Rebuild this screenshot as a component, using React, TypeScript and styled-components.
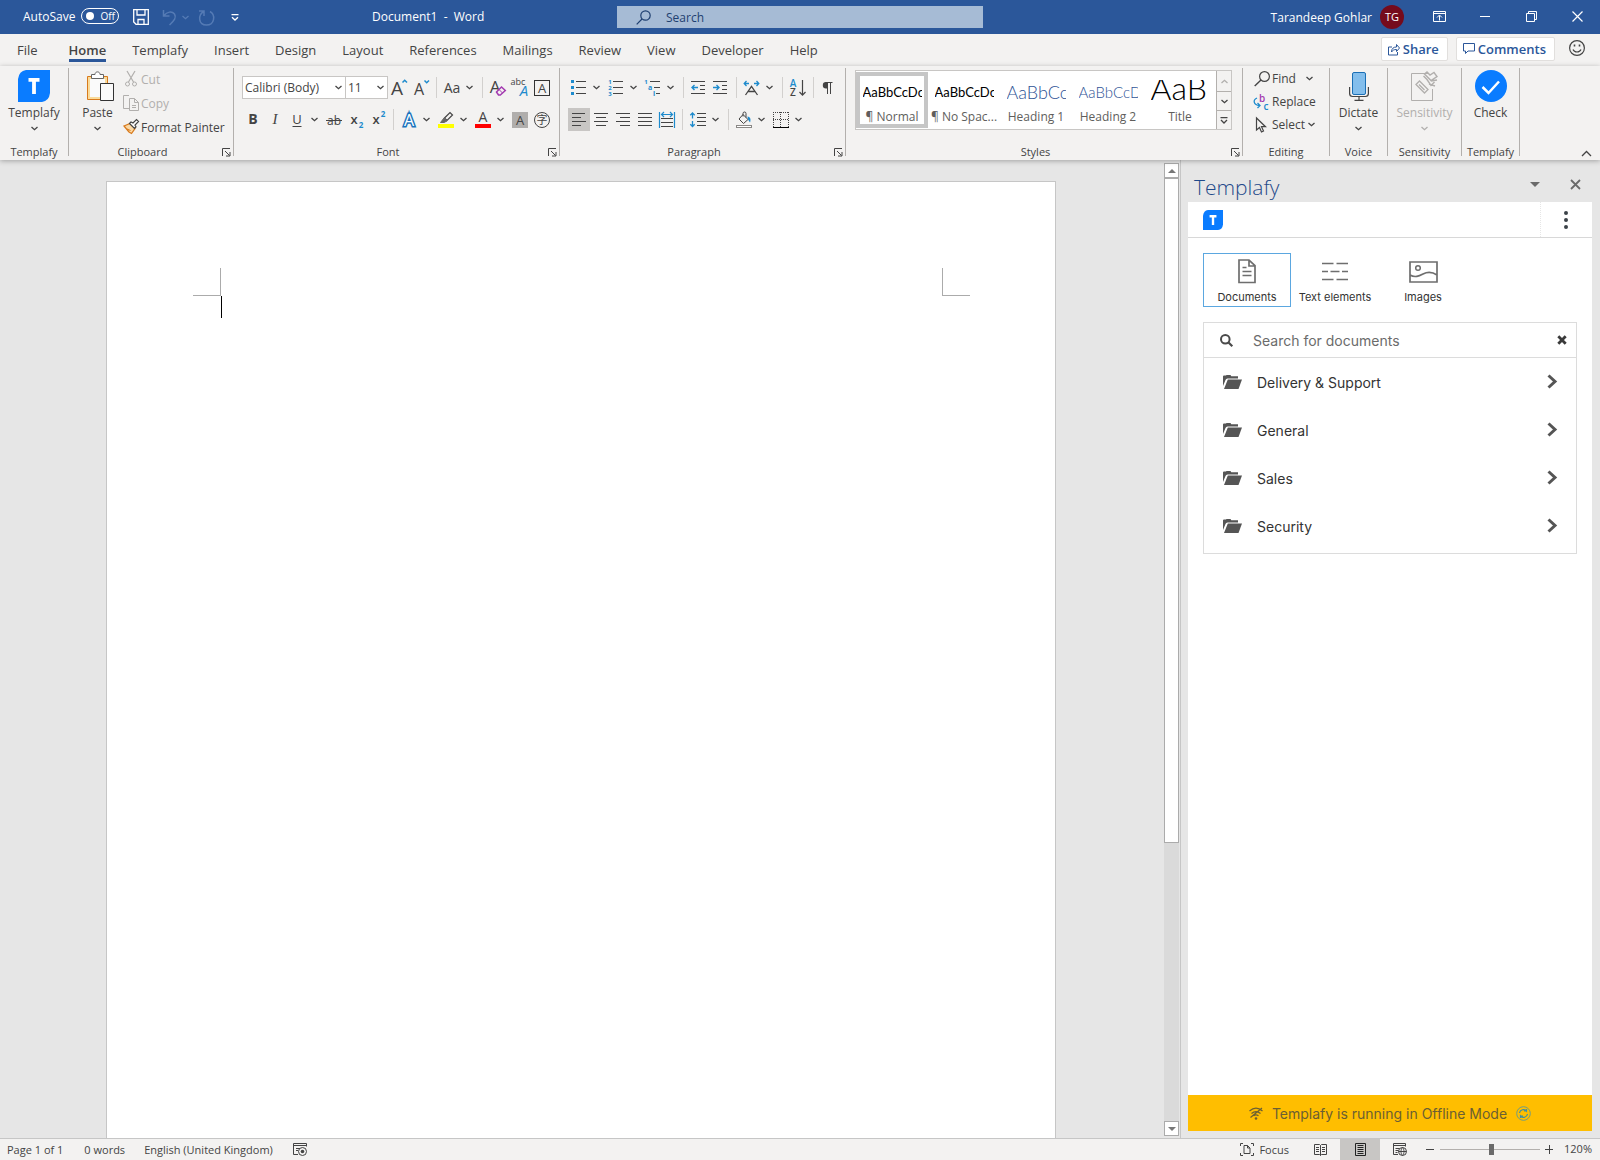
import React from "react";
import styled, { createGlobalStyle, css } from "styled-components";

const UI = '"Open Sans", "Noto Sans", sans-serif';
const PANE = 'Inter, Roboto, sans-serif';
const INK = "#444444";
const BLUE = "#2b579a";
const ACCENT = "#1e8bcd";

const GlobalStyle = createGlobalStyle`
  * { box-sizing: border-box; }
  html, body, #root { height: 100%; }
  body { margin: 0; font-family: ${UI}; font-size: 12px; color: ${INK}; background: #e6e6e6; }
  button, input, select { font: inherit; color: inherit; margin: 0; padding: 0; border: 0; background: none; }
  button { cursor: pointer; }
  svg { display: block; flex: none; overflow: visible; }
`;

const Shell = styled.div`
  display: flex;
  flex-direction: column;
  height: 100vh;
  overflow: hidden;
`;

/* ---------- title bar ---------- */
const TitleBar = styled.header`
  display: grid;
  grid-template-columns: 1fr 366px 1fr;
  align-items: center;
  height: 34px;
  flex: none;
  background: ${BLUE};
  color: #fff;
`;
const QuickAccess = styled.div`
  display: flex;
  align-items: center;
  padding-left: 23px;
`;
const AutoSave = styled.label`
  display: flex;
  align-items: center;
  gap: 6px;
  padding-bottom: 2px;
`;
const Toggle = styled.span`
  display: flex;
  align-items: center;
  gap: 6px;
  width: 38px;
  height: 16px;
  padding-left: 4px;
  border: 1px solid #fff;
  border-radius: 8px;
  font-size: 10px;
  line-height: 14px;
  &::before {
    content: "";
    width: 8px;
    height: 8px;
    border-radius: 50%;
    background: #fff;
  }
`;
const HiddenCheck = styled.input`
  appearance: none;
  width: 0;
  height: 0;
  margin-left: -6px;
`;
const QuickButton = styled.button<{ $faded?: boolean; $gap: number }>`
  display: flex;
  align-items: center;
  gap: 5px;
  height: 24px;
  margin-left: ${(p) => p.$gap}px;
  color: ${(p) => (p.$faded ? "#557bb5" : "#fff")};
`;
const DocTitle = styled.span`
  flex: 1;
  padding-bottom: 2px;
  text-align: center;
  white-space: pre;
`;
const SearchBox = styled.label`
  display: flex;
  align-items: center;
  gap: 15px;
  height: 22px;
  padding-left: 19px;
  background: #a6bbd5;
  color: #1f3f70;
`;
const SearchInput = styled.input`
  flex: 1;
  min-width: 0;
  outline: none;
  &::placeholder { color: #1f3f70; opacity: 1; }
`;
const TitleRight = styled.div`
  display: flex;
  align-items: center;
  justify-content: flex-end;
`;
const Avatar = styled.span`
  width: 24px;
  height: 24px;
  margin: 0 12px 0 8px;
  border-radius: 50%;
  background: #750b1c;
  font-size: 11px;
  line-height: 24px;
  text-align: center;
`;
const WindowButton = styled.button`
  display: flex;
  align-items: center;
  justify-content: center;
  width: 46px;
  height: 32px;
  padding-bottom: 2px;
`;

/* ---------- tabs ---------- */
const TabBar = styled.nav`
  display: flex;
  align-items: center;
  height: 32px;
  flex: none;
  padding: 0 15px 0 4px;
  background: #f3f2f1;
`;
const Tab = styled.button<{ $active?: boolean }>`
  height: 30px;
  padding: 0 13px;
  font-size: 13px;
  line-height: 28px;
  position: relative;
  &:first-child { margin-right: 5px; }
  ${(p) =>
    p.$active &&
    css`
      font-weight: 600;
      &::after {
        content: "";
        position: absolute;
        left: 13px;
        right: 13px;
        bottom: 3px;
        height: 3px;
        background: ${BLUE};
      }
    `}
`;
const TabActions = styled.div`
  display: flex;
  align-items: center;
  gap: 8px;
  margin-left: auto;
`;
const ActionButton = styled.button`
  display: flex;
  align-items: center;
  gap: 3px;
  height: 24px;
  margin-bottom: 2px;
  padding: 0 8px 0 6px;
  border: 1px solid #e1dfdd;
  border-radius: 2px;
  background: #fff;
  color: ${BLUE};
  font-size: 13px;
  font-weight: 600;
`;
const Smiley = styled.button`
  margin: 0 0 4px 6px;
`;

/* ---------- ribbon ---------- */
const Ribbon = styled.section`
  display: flex;
  flex: none;
  height: 94px;
  padding-top: 2px;
  background: #f3f2f1;
  box-shadow: 0 1px 5px rgba(0, 0, 0, 0.3);
  position: relative;
  z-index: 1;
`;
const GroupBox = styled.div<{ $w: number }>`
  display: flex;
  flex-direction: column;
  flex: none;
  width: ${(p) => p.$w}px;
  height: 88px;
  border-right: 1px solid #b3b0ad;
`;
const GroupBody = styled.div<{ $pad?: string; $dir?: string }>`
  display: flex;
  flex: none;
  flex-direction: ${(p) => p.$dir || "row"};
  gap: ${(p) => (p.$dir ? "9px" : "0")};
  height: 77px;
  padding: ${(p) => p.$pad || "0"};
`;
const GroupFoot = styled.div`
  display: flex;
  align-items: center;
  height: 14px;
  line-height: 14px;
`;
const GroupName = styled.span`
  flex: 1;
  text-align: center;
  font-size: 11px;
  white-space: nowrap;
`;
const Launcher = styled.button`
  margin: 0 2px 0 6px;
`;
const BigButton = styled.button<{ $w?: number; $off?: boolean }>`
  display: flex;
  flex-direction: column;
  align-items: center;
  width: ${(p) => (p.$w ? p.$w + "px" : "100%")};
  height: 74px;
  padding-top: 2px;
  line-height: 16px;
  color: ${(p) => (p.$off ? "#b1afad" : INK)};
  white-space: nowrap;
`;
const BigIcon = styled.span`
  display: flex;
  align-items: center;
  justify-content: center;
  height: 32px;
  margin-bottom: 3px;
`;
const BigChevron = styled.span`
  margin-top: 5px;
`;
const Stack = styled.div`
  display: flex;
  flex-direction: column;
  margin-top: -1px;
`;
const SmallButton = styled.button<{ $h: number; $off?: boolean }>`
  display: flex;
  align-items: center;
  gap: 2px;
  height: ${(p) => p.$h}px;
  color: ${(p) => (p.$off ? "#b1afad" : INK)};
  white-space: nowrap;
`;
const SmallIcon = styled.span`
  display: flex;
  width: 16px;
  justify-content: center;
`;
const SmallChevron = styled.span<{ $gap: number }>`
  margin-left: ${(p) => p.$gap}px;
`;
const ToolRow = styled.div`
  display: flex;
  align-items: center;
  height: 23px;
`;
const Tool = styled.button<{ $on?: boolean }>`
  display: flex;
  align-items: center;
  justify-content: center;
  width: 22px;
  height: 23px;
  background: ${(p) => (p.$on ? "#c8c6c4" : "transparent")};
`;
const Drop = styled.button`
  display: flex;
  align-items: center;
  width: 15px;
  height: 23px;
  padding-left: 3px;
`;
const Rule = styled.span`
  width: 1px;
  height: 21px;
  margin: 0 4px;
  background: #d2d0ce;
`;
const Combo = styled.span<{ $w: number }>`
  display: grid;
  grid-template-columns: 1fr 10px;
  align-items: center;
  width: ${(p) => p.$w}px;
  height: 23px;
  margin-right: -1px;
  border: 1px solid #c8c6c4;
  background: #fff;
  & > select {
    grid-area: 1 / 1 / 2 / 3;
    appearance: none;
    height: 21px;
    padding-left: 2px;
    outline: none;
  }
  & > svg { grid-area: 1 / 2; pointer-events: none; }
`;
const ComboEnd = styled.span`
  width: 1px;
`;

/* ---------- styles gallery ---------- */
const Gallery = styled.div`
  display: flex;
  width: 377px;
  height: 60px;
  border: 1px solid #c8c6c4;
  background: #fff;
`;
const StyleCard = styled.button<{ $on?: boolean }>`
  display: flex;
  flex-direction: column;
  align-items: center;
  gap: 5px;
  width: 72px;
  height: 56px;
  margin-top: 1px;
  padding-top: 4px;
  border: 4px solid ${(p) => (p.$on ? "#c6c6c6" : "transparent")};
`;
const Sample = styled.span<{ $size: number; $color: string; $light?: boolean; $lh?: number }>`
  flex: none;
  width: 59px;
  height: 24px;
  overflow: hidden;
  text-align: left;
  font-family: Lato, sans-serif;
  font-size: ${(p) => p.$size}px;
  font-weight: ${(p) => (p.$light ? 300 : 400)};
  line-height: ${(p) => p.$lh || 24}px;
  color: ${(p) => p.$color};
  white-space: nowrap;
`;
const SampleName = styled.span`
  line-height: 16px;
  white-space: nowrap;
  color: #605e5c;
`;
const GallerySteps = styled.div`
  display: grid;
  grid-template-rows: 20px 19px 1fr;
  width: 15px;
  margin-left: auto;
  border-left: 1px solid #b3b0ad;
`;
const Step = styled.button<{ $off?: boolean }>`
  display: flex;
  align-items: center;
  justify-content: center;
  background: #f3f2f1;
  color: ${(p) => (p.$off ? "#b1afad" : INK)};
  & + & { border-top: 1px solid #b3b0ad; }
`;
const Collapse = styled.button`
  align-self: flex-end;
  margin: 0 8px 3px auto;
`;

/* ---------- workspace ---------- */
const Workspace = styled.main`
  display: flex;
  flex: 1;
  min-height: 0;
`;
const Canvas = styled.div`
  display: flex;
  justify-content: center;
  flex: 1;
  padding: 21px 2px 0 0;
`;
const Page = styled.article`
  width: 950px;
  padding: 86px 85px 0 86px;
  border: 1px solid #c6c6c6;
  border-bottom: 0;
  background: #fff;
`;
const Corners = styled.div`
  display: flex;
  justify-content: space-between;
`;
const Corner = styled.span<{ $side: "left" | "right" }>`
  width: 28px;
  height: 28px;
  border-bottom: 1px solid #ababab;
  ${(p) => (p.$side === "left" ? "border-right" : "border-left")}: 1px solid #ababab;
`;
const Caret = styled.span`
  display: block;
  width: 1px;
  height: 22px;
  margin-left: 28px;
  background: #000;
`;
const Scroll = styled.div`
  display: flex;
  flex-direction: column;
  width: 15px;
  margin: 3px 1px 2px 0;
  background: #dadada;
`;
const ScrollButton = styled.button`
  display: flex;
  align-items: center;
  justify-content: center;
  height: 15px;
  border: 1px solid #ababab;
  background: #fff;
`;
const ScrollTrack = styled.div`
  flex: 1;
`;
const Thumb = styled.div`
  height: 70.5%;
  border: 1px solid #ababab;
  background: #fff;
`;

/* ---------- task pane ---------- */
const Pane = styled.aside`
  display: flex;
  flex-direction: column;
  width: 420px;
  padding: 0 8px 7px 7px;
  border-left: 1px solid #c6c6c6;
`;
const PaneTitle = styled.div`
  display: flex;
  align-items: center;
  height: 42px;
  padding: 12px 11px 0 6px;
`;
const PaneName = styled.h1`
  flex: 1;
  margin: 0;
  font-size: 21px;
  font-weight: 300;
  line-height: 28px;
  color: #1f4a8a;
`;
const PaneButton = styled.button`
  margin: -6px 0 0 30px;
`;
const PaneBody = styled.div`
  display: flex;
  flex-direction: column;
  flex: 1;
  background: #fff;
  font-family: ${PANE};
  color: #333;
`;
const PaneHeader = styled.div`
  display: flex;
  align-items: center;
  justify-content: space-between;
  height: 36px;
  padding-left: 15px;
  border-bottom: 1px solid #d8d8d8;
`;
const More = styled.button`
  display: flex;
  align-items: center;
  justify-content: center;
  width: 52px;
  height: 35px;
  padding-right: 2px;
  border-left: 1px dotted #e6e6e6;
`;
const KindTabs = styled.div`
  display: flex;
  padding: 15px 15px 0;
`;
const KindTab = styled.button<{ $on?: boolean }>`
  display: flex;
  flex-direction: column;
  align-items: center;
  gap: 5px;
  width: 88px;
  height: 54px;
  padding-top: 4px;
  border: 1px solid ${(p) => (p.$on ? "#5ba7e0" : "transparent")};
  font-size: 11px;
  line-height: 16px;
  white-space: nowrap;
`;
const Finder = styled.div`
  margin: 15px 15px 0;
  border: 1px solid #dcdcdc;
`;
const FinderField = styled.label`
  display: flex;
  align-items: center;
  height: 35px;
  padding: 0 9px 0 16px;
  border-bottom: 1px solid #dcdcdc;
`;
const FinderInput = styled.input`
  flex: 1;
  min-width: 0;
  padding-left: 20px;
  font-size: 14px;
  outline: none;
  &::placeholder { color: #6b6b6b; opacity: 1; }
`;
const FolderList = styled.ul`
  margin: 0;
  padding: 0 0 3px;
  list-style: none;
`;
const FolderRow = styled.button`
  display: flex;
  align-items: center;
  gap: 14px;
  width: 100%;
  height: 48px;
  padding: 0 19px;
  font-size: 14px;
  text-align: left;
  & > span { flex: 1; }
`;
const Offline = styled.div`
  display: flex;
  align-items: center;
  justify-content: center;
  gap: 9px;
  height: 36px;
  margin-top: auto;
  background: #ffbe00;
  color: #6b5f33;
  font-size: 14px;
`;

/* ---------- status bar ---------- */
const StatusBar = styled.footer`
  display: flex;
  align-items: center;
  flex: none;
  height: 22px;
  padding: 0 8px 0 7px;
  border-top: 1px solid #c6c6c6;
  background: #f3f2f1;
  font-size: 11px;
  white-space: nowrap;
`;
const StatusItem = styled.button<{ $gap?: number }>`
  display: flex;
  align-items: center;
  gap: 5px;
  height: 21px;
  margin-right: ${(p) => p.$gap || 0}px;
  padding-bottom: 1px;
`;
const Spacer = styled.span`
  flex: 1;
`;
const ViewButton = styled.button<{ $on?: boolean }>`
  display: flex;
  align-items: center;
  justify-content: center;
  width: 40px;
  height: 21px;
  background: ${(p) => (p.$on ? "#c8c6c4" : "transparent")};
`;
const Zoom = styled.input`
  appearance: none;
  width: 100px;
  height: 21px;
  margin: 0 5px;
  background: linear-gradient(#b3b0ad, #b3b0ad) center / 100% 1px no-repeat;
  &::-webkit-slider-thumb {
    appearance: none;
    width: 5px;
    height: 11px;
    background: #6a6a6a;
  }
`;
const ZoomValue = styled.span`
  width: 38px;
  padding-bottom: 2px;
  text-align: right;
`;

/* ---------- icons ---------- */
type IconProps = { w?: number; h?: number; children: React.ReactNode };
const Icon = ({ w = 16, h = 16, children }: IconProps) => (
  <svg width={w} height={h} viewBox={`0 0 ${w} ${h}`} fill="none" stroke="currentColor" strokeWidth="1" aria-hidden="true">
    {children}
  </svg>
);
const Glyph = ({ x, y, s, c = INK, w = 400, i, f = UI, children }: any) => (
  <text x={x} y={y} fontSize={s} fontFamily={f} fontWeight={w} fontStyle={i ? "italic" : "normal"} textAnchor="middle" fill={c} stroke="none">
    {children}
  </text>
);
const Chevron = () => (
  <Icon w={7} h={5}>
    <path d="M.5 1 3.500 3.700l3-2.700" strokeWidth="1.300" />
  </Icon>
);
const ChevronUp = () => (
  <Icon w={7} h={5}>
    <path d="M.5 4 3.500 1.300l3 2.700" strokeWidth="1.300" />
  </Icon>
);
const TemplafyLogo = ({ size }: { size: number }) => (
  <svg width={size} height={size} viewBox="0 0 32 32" aria-hidden="true">
    <path d="M8 0H32V23Q31 31 24 32H0V9Q1 1 8 0Z" fill="#0a7cff" />
    <path d="M10.500 8h11v3.800h-3.600V24h-3.800V11.800h-3.600z" fill="#fff" />
  </svg>
);
const LauncherIcon = () => (
  <Icon w={9} h={9}>
    <path d="M.5 8V.5H8M3 3l4.500 4.500M8 4v4H4" />
  </Icon>
);
const lines = (list: number[][]) => list.map(([x1, x2, y]) => `M${x1} ${y}.5H${x2}`).join("");
const Align = ({ rows }: { rows: number[][] }) => (
  <Icon>
    <path d={lines(rows)} />
  </Icon>
);

type GroupProps = { name: string; w: number; launcher?: boolean; pad?: string; dir?: string; children: React.ReactNode };
const Group = ({ name, w, launcher, pad, dir, children }: GroupProps) => (
  <GroupBox $w={w}>
    <GroupBody $pad={pad} $dir={dir}>{children}</GroupBody>
    <GroupFoot>
      <GroupName>{name}</GroupName>
      {launcher && (
        <Launcher aria-label={`${name} settings`}>
          <LauncherIcon />
        </Launcher>
      )}
    </GroupFoot>
  </GroupBox>
);
const Split = ({ label, children }: { label: string; children: React.ReactNode }) => (
  <>
    <Tool aria-label={label}>{children}</Tool>
    <Drop aria-label={`${label} options`}>
      <Chevron />
    </Drop>
  </>
);

const tabs = ["File", "Home", "Templafy", "Insert", "Design", "Layout", "References", "Mailings", "Review", "View", "Developer", "Help"];
const folders = ["Delivery & Support", "General", "Sales", "Security"];
const styleCards = [
  { name: "¶ Normal", text: "AaBbCcDc", size: 13, color: "#000" },
  { name: "¶ No Spac...", text: "AaBbCcDc", size: 13, color: "#000" },
  { name: "Heading 1", text: "AaBbCc", size: 18, color: "#2f5496", light: true },
  { name: "Heading 2", text: "AaBbCcD", size: 15, color: "#2f5496", light: true },
  { name: "Title", text: "AaB", size: 32, color: "#000", light: true, lh: 16 },
];

const FontGroup = () => (
  <Group name="Font" w={326} launcher pad="8px 0 0 8px" dir="column">
    <ToolRow>
      <Combo $w={104}>
        <select aria-label="Font"><option>Calibri (Body)</option></select>
        <Chevron />
      </Combo>
      <Combo $w={43}>
        <select aria-label="Font size"><option>11</option></select>
        <Chevron />
      </Combo>
      <ComboEnd />
      <Tool aria-label="Grow font">
        <Icon w={18} h={20}><Glyph x={7} y={17} s={19}>A</Glyph><path d="M12.500 4.500 14.700 2.300 17 4.500" stroke={ACCENT} strokeWidth="1.500" /></Icon>
      </Tool>
      <Tool aria-label="Shrink font">
        <Icon w={18} h={20}><Glyph x={7} y={17} s={16}>A</Glyph><path d="M12.500 2.500l2.200 2.200L17 2.500" stroke={ACCENT} strokeWidth="1.500" /></Icon>
      </Tool>
      <Rule />
      <Split label="Change case"><Icon w={20} h={16}><Glyph x={10} y={13} s={14}>Aa</Glyph></Icon></Split>
      <Rule />
      <Tool aria-label="Clear formatting">
        <Icon w={18} h={18}>
          <Glyph x={6} y={14} s={17}>A</Glyph>
          <path d="M7.500 13 12.500 8l3.800 3.500-5 4.500H9.500z" fill="#f3f2f1" stroke="#a33ab0" strokeWidth="1.500" />
          <path d="M10 10.500l3.500 3.500" stroke="#a33ab0" />
        </Icon>
      </Tool>
      <Tool aria-label="Phonetic guide">
        <Icon w={18} h={18}><Glyph x={7} y={6} s={9}>abc</Glyph><Glyph x={13} y={17} s={15} c={ACCENT} i>A</Glyph></Icon>
      </Tool>
      <Tool aria-label="Character border">
        <Icon><rect x=".5" y=".5" width="15" height="15" stroke="#333" /><Glyph x={8} y={13} s={13}>A</Glyph></Icon>
      </Tool>
    </ToolRow>
    <ToolRow>
      <Tool aria-label="Bold"><Icon><Glyph x={8} y={12} s={14} w={700}>B</Glyph></Icon></Tool>
      <Tool aria-label="Italic"><Icon><Glyph x={8} y={12} s={15} i f='"Liberation Serif", serif'>I</Glyph></Icon></Tool>
      <Split label="Underline"><Icon><Glyph x={8} y={12} s={13}>U</Glyph><path d="M3.500 14.500h9" /></Icon></Split>
      <Tool aria-label="Strikethrough"><Icon><Glyph x={8} y={13} s={12}>ab</Glyph><path d="M0 8.500h16" /></Icon></Tool>
      <Tool aria-label="Subscript"><Icon><Glyph x={6} y={12} s={13} w={600}>x</Glyph><Glyph x={13} y={16} s={8} c={ACCENT} w={700}>2</Glyph></Icon></Tool>
      <Tool aria-label="Superscript"><Icon><Glyph x={6} y={12} s={13} w={600}>x</Glyph><Glyph x={13} y={5} s={8} c={ACCENT} w={700}>2</Glyph></Icon></Tool>
      <Rule />
      <Split label="Text effects">
        <Icon><text x="8" y="14" fontSize="16" fontFamily={UI} fontWeight="400" textAnchor="middle" fill="#fff" stroke="#1a73bd" strokeWidth="3" paintOrder="stroke">A</text></Icon>
      </Split>
      <Split label="Highlight colour">
        <Icon>
          <path d="M6.500 6 12 .5 14.500 3 9 8.500Z" fill="#f3f2f1" strokeWidth="1.200" />
          <path d="M6 6 9 9 6 10.500H2.500Z" fill="#666" stroke="#666" />
          <rect y="12" width="16" height="4" fill="#ffff00" stroke="none" />
        </Icon>
      </Split>
      <Split label="Font colour">
        <Icon><Glyph x={8} y={10} s={14}>A</Glyph><rect y="12" width="16" height="4" fill="#ff0000" stroke="none" /></Icon>
      </Split>
      <Tool aria-label="Character shading">
        <Icon><rect width="16" height="16" fill="#b0aeac" stroke="none" /><Glyph x={8} y={13} s={13}>A</Glyph></Icon>
      </Tool>
      <Tool aria-label="Enclose characters">
        <Icon><circle cx="8" cy="8" r="7.500" /><Glyph x={8} y={12} s={11} f='"Noto Sans CJK SC", sans-serif'>字</Glyph></Icon>
      </Tool>
    </ToolRow>
  </Group>
);

const ParagraphGroup = () => (
  <Group name="Paragraph" w={286} launcher pad="8px 0 0 8px" dir="column">
    <ToolRow>
      <Split label="Bullets">
        <Icon><path d={lines([[5, 15, 1], [5, 15, 7], [5, 15, 13]])} /><path d="M0 0h3v3H0zM0 6h3v3H0zM0 12h3v3H0z" fill={ACCENT} stroke="none" /></Icon>
      </Split>
      <Split label="Numbering">
        <Icon>
          <path d={lines([[5, 15, 1], [5, 15, 7], [5, 15, 13]])} />
          <Glyph x={2} y={4} s={6} w={700} c={ACCENT}>1</Glyph><Glyph x={2} y={10} s={6} w={700} c={ACCENT}>2</Glyph><Glyph x={2} y={16} s={6} w={700} c={ACCENT}>3</Glyph>
        </Icon>
      </Split>
      <Split label="Multilevel list">
        <Icon>
          <path d={lines([[5, 15, 1], [9, 15, 7], [11, 15, 13]])} />
          <Glyph x={1} y={4} s={6} w={700} c={ACCENT}>1</Glyph><Glyph x={5} y={10} s={7} w={700} c={ACCENT}>a</Glyph><Glyph x={9} y={16} s={7} w={700} c={ACCENT}>i</Glyph>
        </Icon>
      </Split>
      <Rule />
      <Tool aria-label="Decrease indent">
        <Icon><path d={lines([[0, 14, 1], [9, 14, 5], [9, 14, 9], [0, 14, 13]])} /><path d="M7 7.500H1M3.500 5 1 7.500 3.500 10" stroke={ACCENT} strokeWidth="1.400" /></Icon>
      </Tool>
      <Tool aria-label="Increase indent">
        <Icon><path d={lines([[0, 14, 1], [9, 14, 5], [9, 14, 9], [0, 14, 13]])} /><path d="M0 7.500h6M3.500 5 6 7.500 3.500 10" stroke={ACCENT} strokeWidth="1.400" /></Icon>
      </Tool>
      <Rule />
      <Split label="Asian layout">
        <Icon><path d="M1.500 15 7.500 6.500 13.500 15M4 11.500h7" strokeWidth="1.300" /><path d="M5 3.500H.3M2.500 1 .2 3.500 2.500 6M10 3.500h4.700M12.500 1l2.300 2.500L12.500 6" stroke={ACCENT} strokeWidth="1.300" /></Icon>
      </Split>
      <Rule />
      <Tool aria-label="Sort">
        <Icon w={16} h={18}><Glyph x={3} y={8} s={10} c={ACCENT} w={600}>A</Glyph><Glyph x={3} y={17} s={10} w={600}>Z</Glyph><path d="M12.500 1v15M9.500 13l3 3.200 3-3.200" strokeWidth="1.200" /></Icon>
      </Tool>
      <Rule />
      <Tool aria-label="Show marks">
        <Icon><path d="M6 2H5a3.200 3.200 0 0 0 0 6.400h1z" fill="currentColor" stroke="none" /><path d="M6.500 14V2.500M9.500 14V2.500M4.500 2.500h7" /></Icon>
      </Tool>
    </ToolRow>
    <ToolRow>
      <Tool $on aria-label="Align left"><Align rows={[[1, 14, 1], [1, 10, 5], [1, 15, 9], [1, 10, 13]]} /></Tool>
      <Tool aria-label="Centre"><Align rows={[[1, 15, 1], [3, 13, 5], [1, 15, 9], [3, 13, 13]]} /></Tool>
      <Tool aria-label="Align right"><Align rows={[[1, 15, 1], [5, 15, 5], [1, 15, 9], [5, 15, 13]]} /></Tool>
      <Tool aria-label="Justify"><Align rows={[[1, 15, 1], [1, 15, 5], [1, 15, 9], [1, 15, 13]]} /></Tool>
      <Tool aria-label="Distribute">
        <Icon><path d={lines([[2, 14, 6], [2, 14, 10], [2, 14, 14]])} /><path d="M.5 0v16M15.500 0v16M2.500 2.500h11M5 0 2.500 2.500 5 5M11 0l2.500 2.500L11 5" stroke={ACCENT} strokeWidth="1.200" /></Icon>
      </Tool>
      <Rule />
      <Split label="Line spacing">
        <Icon><path d={lines([[7, 16, 1], [7, 16, 5], [7, 16, 9], [7, 16, 13]])} /><path d="M2.500 6.500V1M.3 3.300 2.500 1l2.200 2.300M2.500 9v5.500M.3 12.200l2.200 2.300 2.200-2.300" stroke={ACCENT} strokeWidth="1.300" /></Icon>
      </Split>
      <Rule />
      <Split label="Shading">
        <Icon><path d="M7 2.500 12 7.500 7.500 11.500 3 7Z M7 4.500V1.500a1.500 1.500 0 0 1 3 0v4" /><path d="M11.500 4.500c3 .5 3.500 3 2.500 6l-2-3z" fill={ACCENT} stroke="none" /><rect x=".5" y="13.500" width="15" height="2" fill="#fff" stroke="#8a8886" /></Icon>
      </Split>
      <Split label="Borders">
        <Icon><path d="M.5 0v15M15.500 0v15M7.500 0v15M0 .5h15M0 7.500h15" strokeDasharray="1 1" /><path d="M0 15.500h16" stroke="#000" /></Icon>
      </Split>
    </ToolRow>
  </Group>
);

export default function App() {
  return (
    <Shell>
      <GlobalStyle />
      <TitleBar>
        <QuickAccess>
          <AutoSave>
            AutoSave
            <HiddenCheck type="checkbox" />
            <Toggle>Off</Toggle>
          </AutoSave>
          <QuickButton $gap={14} aria-label="Save">
            <Icon w={16} h={16}><path d="M.7.7h14.600v14.600H3L.7 13zM4 1v5h8V1M5 15v-4.500h6V15" strokeWidth="1.300" /></Icon>
          </QuickButton>
          <QuickButton $gap={13} $faded aria-label="Undo">
            <Icon w={15} h={17}><path d="M1.500 1v6h6M2 6.500C5 2.500 10 2 12.500 5c2.500 4-1 7-5 11" strokeWidth="1.500" /></Icon>
            <Chevron />
          </QuickButton>
          <QuickButton $gap={9} $faded aria-label="Redo">
            <Icon w={18} h={17}><path d="M1 2h5v5M12 2.500c6 3.500 4.500 13.500-3.500 13.500C0 16 0 6 5.500 2.500" strokeWidth="1.500" /></Icon>
          </QuickButton>
          <QuickButton $gap={15} aria-label="Customise toolbar">
            <Icon w={8} h={7}><path d="M.5.7h7M1 3.200l3 2.800 3-2.800" strokeWidth="1.300" /></Icon>
          </QuickButton>
          <DocTitle>{"Document1  -  Word"}</DocTitle>
        </QuickAccess>
        <SearchBox>
          <Icon w={15} h={15}><circle cx="9.500" cy="5.500" r="4.700" strokeWidth="1.200" /><path d="M6 9 .7 14.300" strokeWidth="1.200" /></Icon>
          <SearchInput placeholder="Search" aria-label="Search" />
        </SearchBox>
        <TitleRight>
          <span>Tarandeep Gohlar</span>
          <Avatar>TG</Avatar>
          <WindowButton aria-label="Ribbon display options">
            <Icon w={13} h={11}><path d="M.5.5h12v10H.5zM.5 2.500h12M6.500 9.500v-5M4 6.500 6.500 4 9 6.500" /></Icon>
          </WindowButton>
          <WindowButton aria-label="Minimise"><Icon w={10} h={1}><path d="M0 .5h10" /></Icon></WindowButton>
          <WindowButton aria-label="Restore"><Icon w={11} h={11}><path d="M.5 2.500h8v8h-8zM2.500 2.500v-2h8v8h-2" /></Icon></WindowButton>
          <WindowButton aria-label="Close"><Icon w={11} h={11}><path d="M.5.5l10 10M10.500.5l-10 10" strokeWidth="1.200" /></Icon></WindowButton>
        </TitleRight>
      </TitleBar>

      <TabBar>
        {tabs.map((t) => (
          <Tab key={t} $active={t === "Home"}>{t}</Tab>
        ))}
        <TabActions>
          <ActionButton>
            <Icon w={12} h={13}><path d="M4 4H.5v8h9V9M3.500 9c0-3.500 2-5 5-5V1.500l3 3.500-3 3.500V6.500c-2.500 0-3.800.7-5 2.500z" /></Icon>
            Share
          </ActionButton>
          <ActionButton>
            <Icon w={12} h={12}><path d="M.5.5h11v7.500H5L2.500 10.500V8h-2z" /></Icon>
            Comments
          </ActionButton>
          <Smiley aria-label="Feedback">
            <Icon w={16} h={16}><circle cx="8" cy="8" r="7.400" strokeWidth="1.200" /><path d="M4 9.500c1.500 3.300 6.500 3.300 8 0" strokeWidth="1.200" /><path d="M5.500 4.500v2M10.500 4.500v2" strokeWidth="1.600" /></Icon>
          </Smiley>
        </TabActions>
      </TabBar>

      <Ribbon>
        <Group name="Templafy" w={69}>
          <BigButton>
            <BigIcon><TemplafyLogo size={32} /></BigIcon>
            Templafy
            <BigChevron><Chevron /></BigChevron>
          </BigButton>
        </Group>

        <Group name="Clipboard" w={165} launcher pad="0 0 0 3px">
          <BigButton $w={51}>
            <BigIcon>
              <Icon w={32} h={30}>
                <g transform="translate(5 0)">
                  <path d="M.5 5.500h20v23H.5z" fill="#fadb9a" stroke="#d87a1c" />
                  <path d="M3 8h15v18H3z" fill="#fafafa" stroke="none" />
                  <path d="M4.500 7.500V3.500H8C8 0 13 0 13 3.500h3.500v4z" fill="#fff" stroke="#666" />
                  <path d="M13.500 12.500h13v17h-13z" fill="#fafafa" stroke="#333" />
                </g>
              </Icon>
            </BigIcon>
            Paste
            <BigChevron><Chevron /></BigChevron>
          </BigButton>
          <Stack>
            <SmallButton $h={24} $off>
              <SmallIcon><Icon w={12} h={16}><path d="M2 0l6.500 11M10 0 3.500 11" strokeWidth="1.200" /><circle cx="2.500" cy="13" r="2" /><circle cx="9.500" cy="13" r="2" /></Icon></SmallIcon>
              Cut
            </SmallButton>
            <SmallButton $h={24} $off>
              <SmallIcon><Icon><path d="M6 13.500H.5V.5H6M6.500 3.500h5l4 4v8h-9zM11.500 3.500v4h4M9 10.500h4M9 12.500h4" /></Icon></SmallIcon>
              Copy
            </SmallButton>
            <SmallButton $h={24}>
              <SmallIcon>
                <Icon><path d="M1 7l6-2.500 5 5L8.500 14.500 6 13z" fill="#fbd9a5" stroke="#d87a1c" strokeWidth="1.300" /><path d="M4 10l3.500 1.500" stroke="#d87a1c" /><path d="M6.500 4.500 8 3l2 1 3.500-3.500 2 2L12 6l1 2-1.500 1.500z" fill="#fff" strokeWidth="1.200" /></Icon>
              </SmallIcon>
              Format Painter
            </SmallButton>
          </Stack>
        </Group>

        <FontGroup />
        <ParagraphGroup />

        <Group name="Styles" w={397} launcher pad="2px 0 0 9px">
          <Gallery>
            {styleCards.map((s, i) => (
              <StyleCard key={s.name} $on={i === 0}>
                <Sample $size={s.size} $color={s.color} $light={s.light} $lh={s.lh}>{s.text}</Sample>
                <SampleName>{s.name}</SampleName>
              </StyleCard>
            ))}
            <GallerySteps>
              <Step $off aria-label="Previous styles"><ChevronUp /></Step>
              <Step aria-label="Next styles"><Chevron /></Step>
              <Step aria-label="All styles"><Icon w={8} h={7}><path d="M.5.7h7M1 3l3 3 3-3" strokeWidth="1.300" /></Icon></Step>
            </GallerySteps>
          </Gallery>
        </Group>

        <Group name="Editing" w={87} pad="0 0 0 11px">
          <Stack>
            <SmallButton $h={23}>
              <SmallIcon><Icon><circle cx="10.500" cy="5.500" r="4.900" strokeWidth="1.200" /><path d="M7 9 .7 15" strokeWidth="1.400" /></Icon></SmallIcon>
              Find
              <SmallChevron $gap={8}><Chevron /></SmallChevron>
            </SmallButton>
            <SmallButton $h={23}>
              <SmallIcon>
                <Icon><Glyph x={8} y={8} s={10} c="#a33ab0" w={600}>b</Glyph><Glyph x={12} y={16} s={10} c={ACCENT} w={600}>c</Glyph><path d="M3 4C-1.500 6-.5 11 5.500 11.500M3.500 9l2.500 2.500L3.500 14" stroke={ACCENT} strokeWidth="1.300" /></Icon>
              </SmallIcon>
              Replace
            </SmallButton>
            <SmallButton $h={23}>
              <SmallIcon><Icon w={13} h={16}><path d="M.5 1v12l3-2.500 2 4.500 2-1-2-4.300h4z" strokeWidth="1.200" /></Icon></SmallIcon>
              Select
              <SmallChevron $gap={1}><Chevron /></SmallChevron>
            </SmallButton>
          </Stack>
        </Group>

        <Group name="Voice" w={58}>
          <BigButton>
            <BigIcon>
              <Icon w={20} h={29}><rect x="3.500" y=".5" width="13" height="22" rx="1.500" fill="#83beec" stroke="#1a6fb5" /><path d="M.6 15v6.500q0 3 3 3h12.800q3 0 3-3V15M10 25v3M5.500 28.300h9" strokeWidth="1.200" /></Icon>
            </BigIcon>
            Dictate
            <BigChevron><Chevron /></BigChevron>
          </BigButton>
        </Group>

        <Group name="Sensitivity" w={74}>
          <BigButton $off>
            <BigIcon>
              <Icon w={28} h={31}>
                <path d="M17 2.500H.5v27h21V18" fill="none" />
                <path d="M5 13.500 8.500 10 17 18.500 13.500 22ZM8 13.500l5.500 5.500" strokeWidth="1.300" />
                <path d="M12.500 5 16 8.500l4 6 3.500-3.500M14 3.500l6 6 6-4-3-4-4 2.500-3-3-3 2.500M20 10l6-1M18 13l6 2" strokeWidth="1.400" />
              </Icon>
            </BigIcon>
            Sensitivity
            <BigChevron><Chevron /></BigChevron>
          </BigButton>
        </Group>

        <Group name="Templafy" w={58}>
          <BigButton>
            <BigIcon>
              <Icon w={32} h={32}><circle cx="16" cy="16" r="16" fill="#0a7cff" stroke="none" /><path d="M7.500 17l6 6L24 11.500" stroke="#fff" strokeWidth="2.500" /></Icon>
            </BigIcon>
            Check
          </BigButton>
        </Group>
        <Collapse aria-label="Collapse ribbon"><Icon w={11} h={7}><path d="M1 6l4.500-4.500L10 6" strokeWidth="1.300" /></Icon></Collapse>
      </Ribbon>

      <Workspace>
        <Canvas>
          <Page>
            <Corners>
              <Corner $side="left" />
              <Corner $side="right" />
            </Corners>
            <Caret />
          </Page>
        </Canvas>
        <Scroll>
          <ScrollButton aria-label="Scroll up"><Icon w={8} h={4}><path d="M0 4l4-4 4 4z" fill="#777" stroke="none" /></Icon></ScrollButton>
          <ScrollTrack><Thumb /></ScrollTrack>
          <ScrollButton aria-label="Scroll down"><Icon w={8} h={4}><path d="M0 0l4 4 4-4z" fill="#777" stroke="none" /></Icon></ScrollButton>
        </Scroll>
        <Pane>
          <PaneTitle>
            <PaneName>Templafy</PaneName>
            <PaneButton aria-label="Pane options"><Icon w={10} h={5}><path d="M0 0h10L5 5z" fill="#6a6a6a" stroke="none" /></Icon></PaneButton>
            <PaneButton aria-label="Close pane"><Icon w={11} h={11}><path d="M1 1l9 9M10 1l-9 9" stroke="#6a6a6a" strokeWidth="1.800" /></Icon></PaneButton>
          </PaneTitle>
          <PaneBody>
            <PaneHeader>
              <TemplafyLogo size={20} />
              <More aria-label="More"><Icon w={4} h={18}><path d="M2 0a2 2 0 1 1 0 4 2 2 0 0 1 0-4M2 7a2 2 0 1 1 0 4 2 2 0 0 1 0-4M2 14a2 2 0 1 1 0 4 2 2 0 0 1 0-4" fill="#3b4248" stroke="none" /></Icon></More>
            </PaneHeader>
            <KindTabs>
              <KindTab $on>
                <Icon w={20} h={26}><path d="M2 2h10l6 5.500V24.500H2zM12 2v6h6M5.500 9.500h4M5.500 13.500h9M5.500 17.500h9" stroke="#6e6e6e" strokeWidth="1.700" /></Icon>
                Documents
              </KindTab>
              <KindTab>
                <Icon w={26} h={26}><path d="M0 5.500h11.500M14.500 5.500H26M0 13.500h6M8.500 13.500h9M20 13.500h6M0 21.500h11.500M14.500 21.500H26" stroke="#6e6e6e" strokeWidth="1.700" /></Icon>
                Text elements
              </KindTab>
              <KindTab>
                <Icon w={29} h={26}><path d="M1 4h27v20H1zM1 17c5 3 9 1 13-1s8-3 14 1" stroke="#6e6e6e" strokeWidth="1.700" /><circle cx="9" cy="10" r="2.300" stroke="#6e6e6e" strokeWidth="1.500" /></Icon>
                Images
              </KindTab>
            </KindTabs>
            <Finder>
              <FinderField>
                <Icon w={13} h={13}><circle cx="5.300" cy="5.300" r="4.300" stroke="#4a4a4a" strokeWidth="2" /><path d="M8.500 8.500l3.800 3.800" stroke="#4a4a4a" strokeWidth="2.200" /></Icon>
                <FinderInput placeholder="Search for documents" aria-label="Search for documents" />
                <button aria-label="Clear"><Icon w={10} h={10}><path d="M1.300 1.300l7.400 7.400M8.700 1.300 1.300 8.700" stroke="#3a3a3a" strokeWidth="2.800" /></Icon></button>
              </FinderField>
              <FolderList>
                {folders.map((f) => (
                  <li key={f}>
                    <FolderRow>
                      <Icon w={20} h={14}><path d="M0 11V1.500Q0 .5 1 .5h2L3.500 0h4l.8 1.200H15V3.500H4.500Q3 3.500 2.500 5z" fill="#555" stroke="none" /><path d="M4.800 4.500H19L15.500 14H1z" fill="#555" stroke="none" /></Icon>
                      <span>{f}</span>
                      <Icon w={10} h={16}><path d="M1.500 1.500 8 7.500l-6.500 6" stroke="#555" strokeWidth="3" /></Icon>
                    </FolderRow>
                  </li>
                ))}
              </FolderList>
            </Finder>
            <Offline>
              <Icon w={14} h={13}><path d="M.5 4C4.500.5 9.500.5 13.500 4M2.500 6.500c3-2.500 6-2.500 9 0M4.500 8.800c1.700-1.300 3.300-1.300 5 0M1.500 10.500 13 1" strokeWidth="1.200" /><circle cx="7" cy="11.500" r="1.300" fill="currentColor" stroke="none" /></Icon>
              <span>Templafy is running in Offline Mode</span>
              <button aria-label="Retry"><Icon w={15} h={15}><circle cx="7.500" cy="7.500" r="6.800" stroke="#6f9c86" /><path d="M3.500 7a4 4 0 0 1 7-2V3M10.500 5h-2.500M11.500 8a4 4 0 0 1-7 2v2M4.500 10H7" stroke="#3f8fa0" strokeWidth="1.200" /></Icon></button>
            </Offline>
          </PaneBody>
        </Pane>
      </Workspace>

      <StatusBar>
        <StatusItem $gap={21}>Page 1 of 1</StatusItem>
        <StatusItem $gap={19}>0 words</StatusItem>
        <StatusItem $gap={20}>English (United Kingdom)</StatusItem>
        <StatusItem aria-label="Macro recording">
          <Icon w={15} h={13}><path d="M5 11.500H.5V.5h13v3M.5 2.500h13M3 5.500h4M3 7.500h2" /><circle cx="9.500" cy="8.500" r="4" /><circle cx="9.500" cy="8.500" r="1.800" fill="currentColor" stroke="none" /></Icon>
        </StatusItem>
        <Spacer />
        <StatusItem $gap={11}>
          <Icon w={14} h={13}><path d="M3 .5H.5V3M11 .5h2.500V3M.5 10v2.500H3M13.500 10v2.500H11M4 2.500h3.500L10 5v5.500H4zM7.500 2.500V5H10" /></Icon>
          Focus
        </StatusItem>
        <ViewButton aria-label="Read mode"><Icon w={13} h={12}><path d="M6.500 1.500v10M.5.500h5l1 1 1-1h5v10h-5l-1 1-1-1h-5zM2 3.500h3M2 5.500h3M2 7.500h3M8 3.500h3M8 5.500h3M8 7.500h3" /></Icon></ViewButton>
        <ViewButton $on aria-label="Print layout"><Icon w={11} h={13}><path d="M.5.5h10v12H.5zM2.500 2.500h6M2.500 4.500h6M2.500 6.500h6M2.500 8.500h6M2.500 10.500h6" stroke="#222" /></Icon></ViewButton>
        <ViewButton aria-label="Web layout"><Icon w={14} h={13}><path d="M5 11.500H.5V.5h12v3M.5 2.500h12M2.500 5.500h4M2.500 7.500h3M2.500 9.500h2" /><circle cx="9.500" cy="8.500" r="4" /><path d="M5.500 8.500h8M9.500 4.500c-2 2-2 6 0 8M9.500 4.500c2 2 2 6 0 8" /></Icon></ViewButton>
        <StatusItem aria-label="Zoom out"><Icon w={15} h={9}><path d="M6 4.500h8" /></Icon></StatusItem>
        <Zoom type="range" min={0} max={100} defaultValue={52} aria-label="Zoom" />
        <StatusItem aria-label="Zoom in"><Icon w={9} h={9}><path d="M0 4.500h8M4.500 0v9" /></Icon></StatusItem>
        <ZoomValue>120%</ZoomValue>
      </StatusBar>
    </Shell>
  );
}
